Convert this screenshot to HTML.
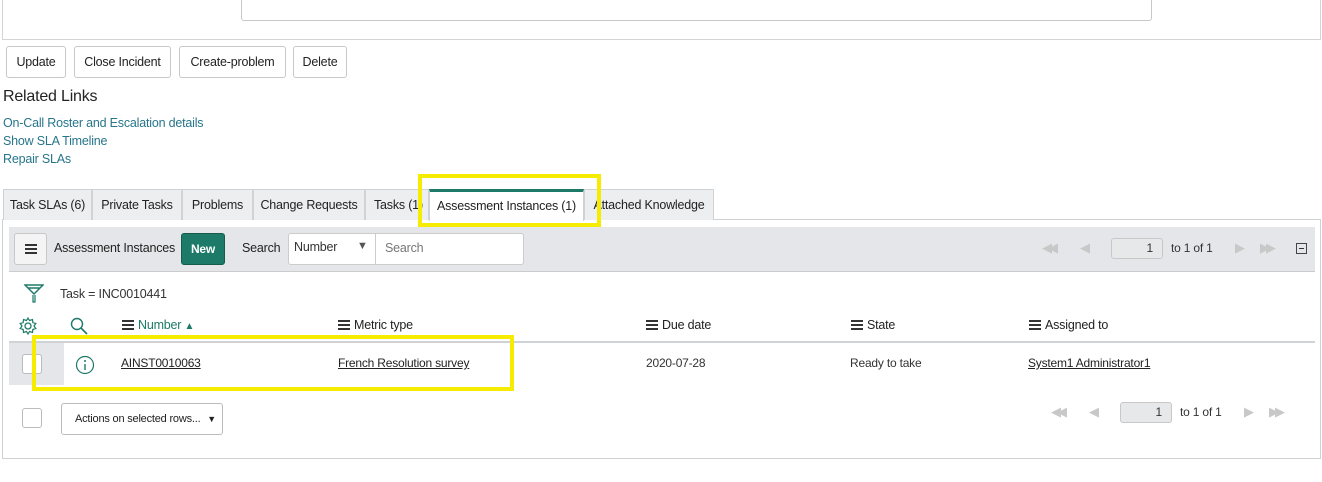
<!DOCTYPE html>
<html><head><style>
*{box-sizing:border-box;margin:0;padding:0}
body{width:1322px;height:482px;background:#fff;font-family:"Liberation Sans",sans-serif;font-size:12px;color:#333;position:relative;overflow:hidden;letter-spacing:-0.2px}
.a{position:absolute}
.btn{position:absolute;top:46px;height:32px;border:1px solid #c8c8c8;border-radius:3px;background:#fff;font-size:12.5px;line-height:30px;text-align:center;color:#222}
.lnk{position:absolute;left:3px;color:#27758a;font-size:12.5px}
.tab{position:absolute;top:189px;height:31px;background:#eceef0;border:1px solid #d0d3d6;border-bottom:none;line-height:31px;font-size:12.5px;text-align:center;color:#222}
.hd{position:absolute;top:318px;font-size:12.5px;color:#222}
.hb{display:inline-block;width:12px;height:10px;border-top:2px solid #333;border-bottom:2px solid #333;position:relative;margin-right:4px;vertical-align:-1px}
.hb:after{content:"";position:absolute;left:0;right:0;top:2px;border-top:2px solid #333}
.u{text-decoration:underline;color:#222}
</style></head><body>
<div class="a" style="left:2px;top:-2px;width:1319px;height:42px;border:1px solid #d4d4d4"></div>
<div class="a" style="left:241px;top:-2px;width:911px;height:23px;border:1px solid #c8c8c8;border-radius:3px"></div>
<div class="btn" style="left:6px;width:60px">Update</div>
<div class="btn" style="left:74px;width:97px">Close Incident</div>
<div class="btn" style="left:179px;width:107px">Create-problem</div>
<div class="btn" style="left:293px;width:54px">Delete</div>
<div class="a" style="left:3px;top:88px;font-size:16px;color:#222">Related Links</div>
<div class="lnk" style="top:116px">On-Call Roster and Escalation details</div>
<div class="lnk" style="top:134px">Show SLA Timeline</div>
<div class="lnk" style="top:152px">Repair SLAs</div>

<div class="a" style="left:2px;top:219px;width:1319px;height:240px;border:1px solid #d0d3d6"></div>
<div class="tab" style="left:3px;width:89px">Task SLAs (6)</div>
<div class="tab" style="left:92px;width:90px">Private Tasks</div>
<div class="tab" style="left:182px;width:71px">Problems</div>
<div class="tab" style="left:253px;width:112px">Change Requests</div>
<div class="tab" style="left:365px;width:64px;text-align:left;padding-left:8px;overflow:hidden">Tasks (1)</div>
<div class="tab" style="left:429px;width:155px;background:#fff;border-top:3px solid #1d7a68;height:32px;line-height:29px">Assessment Instances (1)</div>
<div class="tab" style="left:584px;width:130px">Attached Knowledge</div>

<div class="a" style="left:9px;top:227px;width:1306px;height:45px;background:#e4e6e9;border-bottom:1px solid #ccc"></div>
<div class="a" style="left:14px;top:233px;width:33px;height:32px;border:1px solid #c8c8c8;border-radius:3px;background:#f4f4f4"><span class="hb" style="position:absolute;left:10px;top:10px"></span></div>
<div class="a" style="left:54px;top:241px;font-size:12.5px;color:#222">Assessment Instances</div>
<div class="a" style="left:181px;top:233px;width:44px;height:32px;background:#1d7a68;border:1px solid #155c4e;border-radius:3px;color:#fff;font-weight:bold;line-height:30px;text-align:center">New</div>
<div class="a" style="left:242px;top:241px;font-size:12.5px;color:#222">Search</div>
<div class="a" style="left:288px;top:233px;width:236px;height:32px;background:#fff;border:1px solid #ccc;border-radius:3px"></div>
<div class="a" style="left:375px;top:233px;height:32px;border-left:1px solid #ccc"></div>
<div class="a" style="left:294px;top:240px;font-size:12.5px">Number</div>
<div class="a" style="left:357px;top:240px;font-size:11px;color:#555">▼</div>
<div class="a" style="left:385px;top:241px;font-size:12.5px;color:#777">Search</div>

<div class="a" style="left:1042px;top:240px;color:#c8c8c8;font-size:13px;letter-spacing:-4px">◀◀</div>
<div class="a" style="left:1080px;top:240px;color:#c8c8c8;font-size:13px">◀</div>
<div class="a" style="left:1111px;top:238px;width:52px;height:21px;border:1px solid #c8c8c8;border-radius:3px;background:#e6e8ea;text-align:right;padding-right:9px;line-height:19px">1</div>
<div class="a" style="left:1171px;top:241px">to 1 of 1</div>
<div class="a" style="left:1235px;top:240px;color:#c8c8c8;font-size:13px">▶</div>
<div class="a" style="left:1260px;top:240px;color:#c8c8c8;font-size:13px;letter-spacing:-4px">▶▶</div>
<div class="a" style="left:1296px;top:243px;width:11px;height:11px;border:1px solid #444"><div style="margin:4px 2px 0;border-top:1px solid #333"></div></div>

<svg class="a" style="left:24px;top:283px" width="20" height="22" viewBox="0 0 20 22"><path d="M1 2H19L10 11Z M4 5H16" fill="none" stroke="#1d7a68" stroke-width="1.5"/><path d="M9 12V19H11V12" fill="none" stroke="#1d7a68" stroke-width="1.2"/></svg>
<div class="a" style="left:60px;top:287px;font-size:12.5px">Task = INC0010441</div>

<svg class="a" style="left:18px;top:316px" width="20" height="20" viewBox="0 0 20 20"><circle cx="10" cy="10" r="3" fill="none" stroke="#1d7a68" stroke-width="1.3"/><path d="M10 2L11.5 4.5L14.5 3.5L14.8 6.5L17.8 7.5L16 10L17.8 12.5L14.8 13.5L14.5 16.5L11.5 15.5L10 18L8.5 15.5L5.5 16.5L5.2 13.5L2.2 12.5L4 10L2.2 7.5L5.2 6.5L5.5 3.5L8.5 4.5Z" fill="none" stroke="#1d7a68" stroke-width="1.2"/></svg>
<svg class="a" style="left:69px;top:316px" width="20" height="20" viewBox="0 0 20 20"><circle cx="8" cy="8" r="5.5" fill="none" stroke="#1d7a68" stroke-width="1.4"/><path d="M12 12L18 18" stroke="#1d7a68" stroke-width="1.6"/></svg>
<div class="hd" style="left:122px;color:#1d7a68"><span class="hb"></span>Number <span style="font-size:10px">▲</span></div>
<div class="hd" style="left:338px"><span class="hb"></span>Metric type</div>
<div class="hd" style="left:646px"><span class="hb"></span>Due date</div>
<div class="hd" style="left:851px"><span class="hb"></span>State</div>
<div class="hd" style="left:1029px"><span class="hb"></span>Assigned to</div>
<div class="a" style="left:9px;top:341px;width:1306px;border-top:2px solid #d0d3d6"></div>
<div class="a" style="left:9px;top:343px;width:55px;height:42px;background:#e4e6e9"></div>
<div class="a" style="left:22px;top:354px;width:20px;height:20px;border:1px solid #bbb;border-radius:3px;background:#fff"></div>
<svg class="a" style="left:75px;top:355px" width="20" height="20" viewBox="0 0 20 20"><circle cx="10" cy="10" r="8.5" fill="none" stroke="#1d7a68" stroke-width="1.2"/><circle cx="10" cy="6" r="1" fill="#1d7a68"/><path d="M10 9V15" stroke="#1d7a68" stroke-width="1.4"/></svg>
<div class="a u" style="left:121px;top:356px">AINST0010063</div>
<div class="a u" style="left:338px;top:356px">French Resolution survey</div>
<div class="a" style="left:646px;top:356px">2020-07-28</div>
<div class="a" style="left:850px;top:356px">Ready to take</div>
<div class="a u" style="left:1028px;top:356px">System1 Administrator1</div>

<div class="a" style="left:22px;top:408px;width:20px;height:20px;border:1px solid #bbb;border-radius:3px"></div>
<div class="a" style="left:61px;top:403px;width:162px;height:32px;border:1px solid #bbb;border-radius:3px;font-size:11px;line-height:30px;padding-left:13px;color:#222">Actions on selected rows...<span style="position:absolute;right:6px;font-size:9px">▼</span></div>
<div class="a" style="left:1051px;top:404px;color:#c8c8c8;font-size:13px;letter-spacing:-4px">◀◀</div>
<div class="a" style="left:1089px;top:404px;color:#c8c8c8;font-size:13px">◀</div>
<div class="a" style="left:1120px;top:402px;width:52px;height:21px;border:1px solid #c8c8c8;border-radius:3px;background:#e6e8ea;text-align:right;padding-right:9px;line-height:19px">1</div>
<div class="a" style="left:1180px;top:405px">to 1 of 1</div>
<div class="a" style="left:1244px;top:404px;color:#c8c8c8;font-size:13px">▶</div>
<div class="a" style="left:1269px;top:404px;color:#c8c8c8;font-size:13px;letter-spacing:-4px">▶▶</div>

<div class="a" style="left:418px;top:174px;width:183px;height:53px;border:4px solid #f5ec00"></div>
<div class="a" style="left:32px;top:335px;width:482px;height:56px;border:4px solid #f5ec00"></div>
</body></html>
